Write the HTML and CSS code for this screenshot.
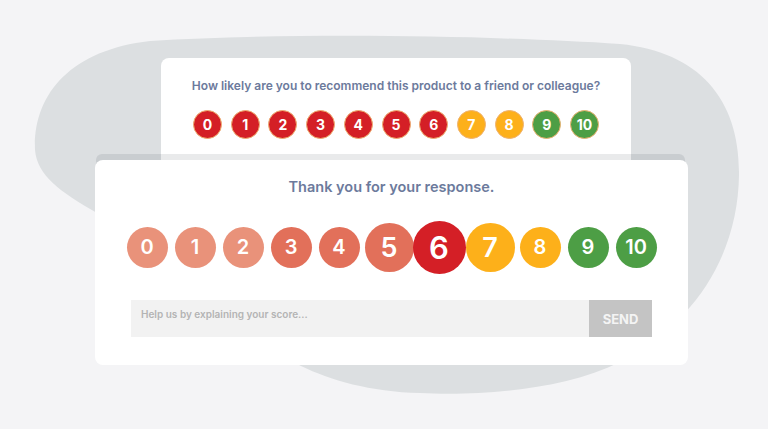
FILE: index.html
```html
<!DOCTYPE html>
<html>
<head>
<meta charset="utf-8">
<link rel="stylesheet" href="styles.css">
</head>
<body>
<div class="stage">
  <svg class="blob" width="768" height="429" viewBox="0 0 768 429">
    <path d="M35 150 C33 95 70 50 150 41 C300 32 500 36 620 44 C700 52 740 100 739 175 C738 250 700 320 620 362 C560 392 470 396 420 393 C370 392 330 380 301 366 C250 340 160 250 97 213 C60 192 37 175 35 150 Z" fill="#dcdfe1"/>
  </svg>
  <div class="card card-top">
    <p class="question">How likely are you to recommend this product to a friend or colleague?</p>
    <div class="scale-top">
      <span class="pip red">0</span>
      <span class="pip red">1</span>
      <span class="pip red">2</span>
      <span class="pip red">3</span>
      <span class="pip red">4</span>
      <span class="pip red">5</span>
      <span class="pip red">6</span>
      <span class="pip amber">7</span>
      <span class="pip amber">8</span>
      <span class="pip green">9</span>
      <span class="pip green">10</span>
    </div>
  </div>
  <div class="card card-main">
    <h2 class="thanks">Thank you for your response.</h2>
    <div class="scale-main">
      <span class="dot light">0</span>
      <span class="dot light">1</span>
      <span class="dot light">2</span>
      <span class="dot mid">3</span>
      <span class="dot mid">4</span>
      <span class="dot mid big d5">5</span>
      <span class="dot red huge">6</span>
      <span class="dot amber big d7">7</span>
      <span class="dot amber d8">8</span>
      <span class="dot green">9</span>
      <span class="dot green">10</span>
    </div>
    <div class="feedback">
      <div class="field">Help us by explaining your score...</div>
      <button class="send">SEND</button>
    </div>
  </div>
</div>
</body>
</html>
```
FILE: styles.css
```css
* { box-sizing: border-box; }
html, body { margin: 0; padding: 0; }
body {
  background: #f4f4f6;
  font-family: "Inter", "Open Sans", sans-serif;
}
.stage {
  position: relative;
  width: 768px;
  height: 429px;
  overflow: hidden;
  padding-top: 58px;
}
.blob {
  position: absolute;
  left: 0;
  top: 0;
  z-index: 0;
}
.card {
  position: relative;
  background: #fff;
  border-radius: 8px;
}
.card-top {
  z-index: 1;
  margin-left: 161px;
  width: 470px;
  height: 102px;
  padding-top: 20px;
  border-radius: 8px 8px 0 0;
}
.question {
  margin: 0;
  text-align: center;
  font-size: 12px;
  line-height: 16px;
  font-weight: 600;
  color: #6c7a9c;
}
.scale-top {
  display: flex;
  justify-content: center;
  gap: 8.7px;
  margin-top: 16px;
}
.pip {
  width: 29px;
  height: 29px;
  border-radius: 50%;
  display: flex;
  align-items: center;
  justify-content: center;
  color: #fff;
  font-size: 14px;
  font-weight: 700;
  border: 1px solid #eeb170;
}
.red { background: #d41f26; }
.amber { background: #fdb01a; }
.green { background: #4d9e45; }
.card-main {
  z-index: 2;
  margin-left: 95px;
  width: 593px;
  padding: 18px 0 28px;
  box-shadow: -1px -8px 0 -2px rgba(40, 50, 60, 0.1);
}
.thanks {
  margin: 0;
  text-align: center;
  font-size: 14.5px;
  line-height: 18px;
  font-weight: 600;
  color: #6c7a9c;
}
.scale-main {
  display: flex;
  justify-content: center;
  align-items: center;
  gap: 7px;
  height: 54px;
  margin-top: 24px;
}
.dot {
  flex: none;
  width: 41px;
  height: 41px;
  border-radius: 50%;
  display: flex;
  align-items: center;
  justify-content: center;
  color: #fff;
  font-size: 20px;
  font-weight: 600;
}
.dot.light { background: #e9927a; }
.dot.mid { background: #e2705a; }
.dot.big { width: 49px; height: 49px; font-size: 27px; }
.dot.huge { width: 53px; height: 53px; font-size: 31px; margin-left: -8px; position: relative; z-index: 1; }
.dot.d5 { margin-left: -2px; }
.dot.d7 { margin-left: -7px; }
.dot.d8 { margin-left: -2px; }
.feedback {
  display: flex;
  width: 521px;
  height: 37px;
  margin: 26px auto 0;
}
.field {
  flex: 1;
  background: #f2f2f2;
  padding: 8px 10px;
  font-size: 10px;
  line-height: 12px;
  font-weight: 600;
  color: #b4b4b4;
}
.send {
  width: 63px;
  border: none;
  background: #c4c4c4;
  color: #f4f4f4;
  font-family: inherit;
  font-size: 13px;
  font-weight: 700;
  padding: 0;
}
```
